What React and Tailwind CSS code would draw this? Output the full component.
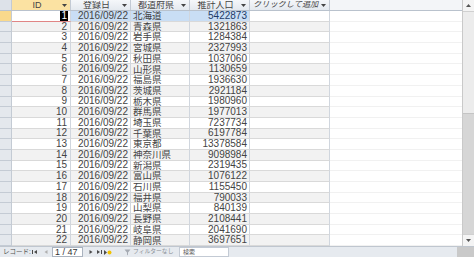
import React from 'react';

const rows = [
  [1, '北海道', 5422873],
  [2, '青森県', 1321863],
  [3, '岩手県', 1284384],
  [4, '宮城県', 2327993],
  [5, '秋田県', 1037060],
  [6, '山形県', 1130659],
  [7, '福島県', 1936630],
  [8, '茨城県', 2921184],
  [9, '栃木県', 1980960],
  [10, '群馬県', 1977013],
  [11, '埼玉県', 7237734],
  [12, '千葉県', 6197784],
  [13, '東京都', 13378584],
  [14, '神奈川県', 9098984],
  [15, '新潟県', 2319435],
  [16, '富山県', 1076122],
  [17, '石川県', 1155450],
  [18, '福井県', 790033],
  [19, '山梨県', 840139],
  [20, '長野県', 2108441],
  [21, '岐阜県', 2041690],
  [22, '静岡県', 3697651],
];

// 列見出しのドロップダウン矢印
const Arrow = () => (
  <svg width="5" height="3" viewBox="0 0 5 3" className="mr-[3px] shrink-0">
    <path d="M0 0H5L2.5 3Z" fill="#444" />
  </svg>
);

const HeadCell = ({ w, label, active, italic }) => (
  <div className={`${w} shrink-0 h-full flex items-center border-r border-[#c3cad4] ${active ? 'bg-[#fbe2a2]' : ''}`}>
    <span className={`flex-1 whitespace-nowrap overflow-hidden ${italic ? 'italic text-left pl-[3px] text-[8.2px]' : 'text-center'}`}>{label}</span>
    <Arrow />
  </div>
);

const NavIcon = ({ kind, color = '#4a4a4a' }) => (
  <svg width="8" height="6" viewBox="0 0 8 6" className="shrink-0">
    {kind === 'first' && (<><rect x="1" y="1" width="1" height="4" fill={color} /><path d="M6 1V5L3 3Z" fill={color} /></>)}
    {kind === 'prev' && <path d="M5.5 1V5L2.5 3Z" fill={color} />}
    {kind === 'next' && <path d="M2.5 1V5L5.5 3Z" fill={color} />}
    {kind === 'last' && (<><path d="M2 1V5L5 3Z" fill={color} /><rect x="6" y="1" width="1" height="4" fill={color} /></>)}
  </svg>
);

export default function App() {
  return (
    <div className="w-[474px] h-[257px] overflow-hidden bg-white flex flex-col font-['Liberation_Sans','Noto_Sans_CJK_JP',sans-serif] text-[#444]">
      <div className="flex h-[246px] overflow-hidden">
        {/* データシート */}
        <div className="flex-1 flex flex-col overflow-hidden">
          <div className="flex h-[11px] shrink-0 text-[9px] leading-none bg-gradient-to-b from-[#f5f7fa] to-[#e4e9ef] border-b border-[#b9c2cd]">
            <div className="w-[12px] shrink-0 h-full bg-[#dde2e9] border-r border-[#c3cad4]" />
            <HeadCell w="w-[59px]" label="ID" active />
            <HeadCell w="w-[60px]" label="登録日" />
            <HeadCell w="w-[59px]" label="都道府県" />
            <HeadCell w="w-[60px]" label="推計人口" />
            <HeadCell w="w-[80px]" label="クリックして追加" italic />
            <div className="flex-1 h-full bg-[#f3f5f8]" />
          </div>
          {rows.map(([id, pref, pop], i) => {
            const sel = i === 0;
            const bg = sel ? 'bg-[#c9def5]' : i % 2 === 1 ? 'bg-[#f2f2f2]' : 'bg-white';
            return (
              <div key={id} className="flex h-[10.7px] shrink-0 leading-none">
                <div className={`w-[12px] shrink-0 border-r border-b border-[#c4cbd4] ${sel ? 'bg-[#f9d98c]' : 'bg-[#e4e8ed]'}`} />
                <div className={`w-[59px] shrink-0 flex items-center justify-end text-[10px] border-r ${sel ? 'bg-white border-b border-b-[#e08585] border-r-[#d0d6de]' : `${bg} border-b border-[#d9d9d9] border-r-[#d0d6de] pr-[3px]`}`}>
                  {sel ? <span className="bg-black text-white h-full flex items-center px-[1px] mr-[2px]">{id}</span> : id}
                </div>
                <div className={`w-[60px] shrink-0 flex items-center justify-end pr-[2px] text-[10px] border-r border-b border-[#d9d9d9] border-r-[#d0d6de] ${bg}`}>2016/09/22</div>
                <div className={`w-[59px] shrink-0 flex items-center pl-[2px] text-[9.5px] whitespace-nowrap overflow-hidden border-r border-b border-[#d9d9d9] border-r-[#d0d6de] ${bg}`}>{pref}</div>
                <div className={`w-[60px] shrink-0 flex items-center justify-end pr-[2px] text-[10px] border-r border-b border-[#d9d9d9] border-r-[#d0d6de] ${bg} ${sel ? 'text-[#1d3a66]' : ''}`}>{pop}</div>
                <div className={`w-[80px] shrink-0 border-r border-b border-[#d9d9d9] border-r-[#d0d6de] ${sel ? 'bg-white' : bg}`} />
                <div className="flex-1 border-b border-[#f1f1f1]" />
              </div>
            );
          })}
        </div>
        {/* 縦スクロールバー */}
        <div className="w-[12px] shrink-0 flex flex-col bg-[#d6d6d6] border-l border-[#c9c9c9]">
          <div className="h-[12px] shrink-0 bg-[#f4f4f4] border-b border-[#d0d0d0] flex items-center justify-center">
            <svg width="5" height="3" viewBox="0 0 5 3"><path d="M0 3H5L2.5 0Z" fill="#555" /></svg>
          </div>
          <div className="h-[102px] shrink-0 bg-[#ececec] border-b border-[#c4c4c4]" />
          <div className="flex-1" />
          <div className="h-[12px] shrink-0 bg-[#f4f4f4] border-t border-[#d0d0d0] flex items-center justify-center">
            <svg width="5" height="3" viewBox="0 0 5 3"><path d="M0 0H5L2.5 3Z" fill="#555" /></svg>
          </div>
        </div>
      </div>
      {/* レコードナビゲーション */}
      <div className="h-[11px] shrink-0 flex items-center bg-[#e6eaef] border-t border-[#bfc6cf] leading-none">
        <span className="pl-[3px] w-[31px] text-[6.5px] text-[#555] whitespace-nowrap">レコード:</span>
        <NavIcon kind="first" />
        <span className="w-[3px]" />
        <NavIcon kind="prev" color="#b0b0b0" />
        <div className="ml-[2px] w-[31px] h-[10px] bg-white border border-[#aab3bf] flex items-center pl-[2px] text-[9px] text-[#333]">1 / 47</div>
        <span className="w-[4px]" />
        <NavIcon kind="next" />
        <NavIcon kind="last" />
        <svg width="9" height="7" viewBox="0 0 9 7" className="shrink-0">
          <path d="M1 1V6L4 3.5Z" fill="#4a4a4a" />
          <circle cx="6.5" cy="3.5" r="2" fill="#f2c200" />
        </svg>
        <span className="w-[12px]" />
        <svg width="7" height="7" viewBox="0 0 7 7" className="shrink-0">
          <path d="M0.5 0.5H6.5L4 3.5V6.5L3 5.5V3.5Z" fill="#a5aab2" />
        </svg>
        <span className="pl-[2px] w-[48px] text-[5.8px] text-[#8a8f96] whitespace-nowrap">フィルターなし</span>
        <div className="w-[50px] h-[10px] bg-white border border-[#c3cad4] flex items-center pl-[3px] text-[6px] text-[#555]">検索</div>
        <div className="flex-1" />
        <div className="w-[17px] h-full bg-[#c9c9c9]" />
      </div>
    </div>
  );
}
